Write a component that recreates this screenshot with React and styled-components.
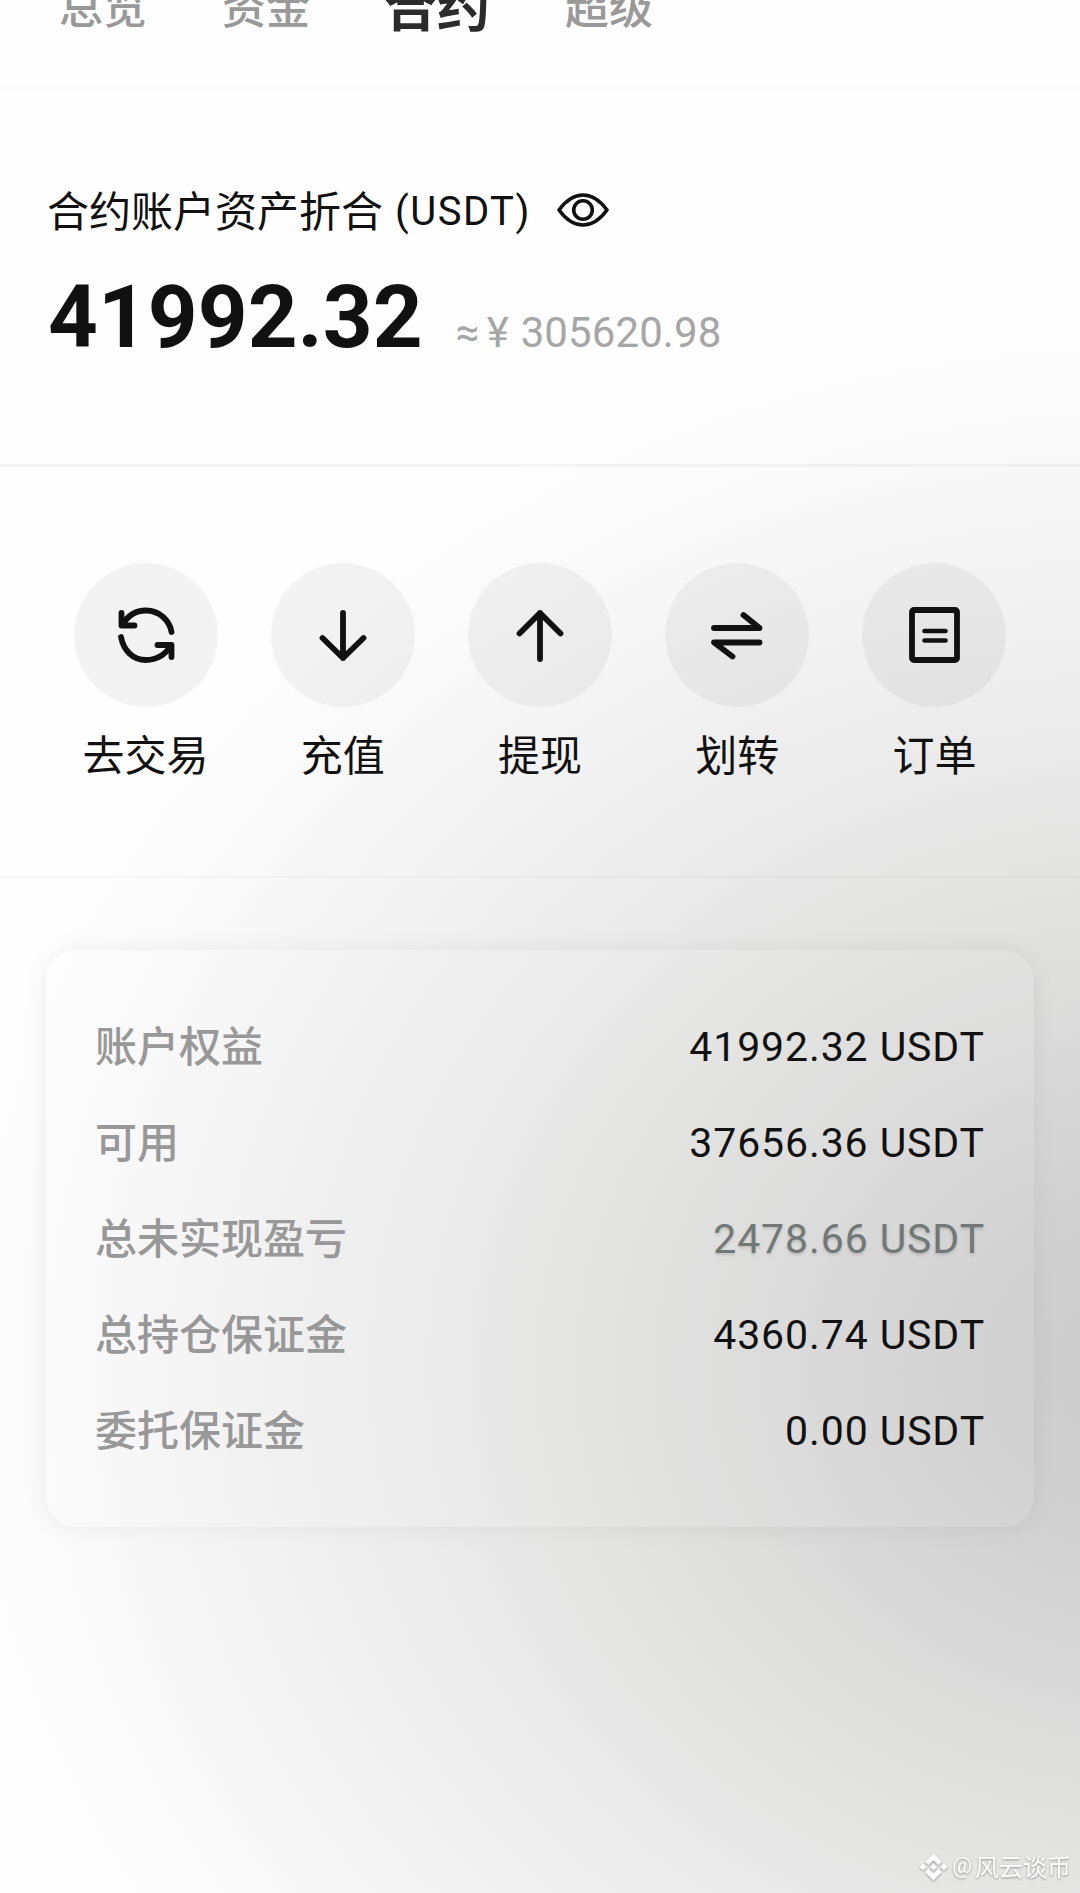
import { createGlobalStyle, styled } from "styled-components";

const TABS = [
  { name: "总览", left: 59 },
  { name: "资金", left: 75 },
  { name: "合约", left: 74, active: true },
  { name: "超级", left: 75 },
];

const ROWS = [
  { label: "账户权益", value: "41992.32 USDT" },
  { label: "可用", value: "37656.36 USDT" },
  { label: "总未实现盈亏", value: "2478.66 USDT", muted: true },
  { label: "总持仓保证金", value: "4360.74 USDT" },
  { label: "委托保证金", value: "0.00 USDT" },
];

const ACTIONS = [
  {
    name: "去交易",
    icon: (
      <>
        <path d="M7.500 12V24.500H20.500" />
        <path d="M8.500 24C14 14 23 9.500 32 9.500C45 9.500 55.500 19 57.500 31" />
        <path d="M57.500 56V44H43.500" />
        <path d="M57 44.500C51 54 42 59 32 59C19 59 9.500 49.500 7 36" />
      </>
    ),
  },
  {
    name: "充值",
    icon: <path d="M32 12V57M11.500 37L32 57L52.500 37" />,
  },
  {
    name: "提现",
    icon: <path d="M32 58V12M11.500 32.500L32 12L52.500 32.500" />,
  },
  {
    name: "划转",
    icon: (
      <>
        <path d="M9 27H54.500L38.500 14" />
        <path d="M54.500 41.500H9L27.500 55.500" />
      </>
    ),
  },
  {
    name: "订单",
    icon: (
      <>
        <rect x="10" y="9" width="45" height="50" rx="2" />
        <path d="M22.500 30H43.500M22.500 39.500H43.500" strokeWidth="4.600" />
      </>
    ),
  },
];

function EyeIcon() {
  return (
    <svg width="52" height="36" viewBox="0 0 52 36" fill="none" stroke="#111" strokeWidth="3.600">
      <path d="M2 18C10 7 18 3 26 3C34 3 42 7 50 18C42 29 34 33 26 33C18 33 10 29 2 18Z" strokeLinejoin="round" />
      <circle cx="26" cy="18" r="9.300" />
    </svg>
  );
}

function DiamondLogo() {
  return (
    <svg width="29" height="30" viewBox="0 0 30 30" fill="#fff">
      <path d="M15 1L23.500 9.500L20 13L15 8L10 13L6.500 9.500Z" />
      <path d="M15 29L23.500 20.500L20 17L15 22L10 17L6.500 20.500Z" />
      <path d="M15 11.500L18.500 15L15 18.500L11.500 15Z" />
      <path d="M4 11.500L7.500 15L4 18.500L0.500 15Z" />
      <path d="M26 11.500L29.500 15L26 18.500L22.500 15Z" />
    </svg>
  );
}

function App() {
  return (
    <Page>
      <GlobalStyle />
      <Tabs>
        {TABS.map(tab => (
          <Tab key={tab.name} $left={tab.left} $active={tab.active}>
            {tab.name}
          </Tab>
        ))}
      </Tabs>
      <Balance>
        <Title>
          <TitleName>合约账户资产折合</TitleName>
          <Unit>(USDT)</Unit>
          <EyeIcon />
        </Title>
        <Amount>
          <Total>41992.32</Total>
          <Approx>
            <Almost>≈</Almost>
            <Yen>¥</Yen>
            305620.98
          </Approx>
        </Amount>
      </Balance>
      <Actions>
        {ACTIONS.map(action => (
          <Action key={action.name}>
            <Circle>
              <svg width="64" height="68" viewBox="0 0 64 68">
                {action.icon}
              </svg>
            </Circle>
            <ActionName>{action.name}</ActionName>
          </Action>
        ))}
      </Actions>
      <Card>
        {ROWS.map(row => (
          <Row key={row.label}>
            <Label>{row.label}</Label>
            <Value $muted={row.muted}>{row.value}</Value>
          </Row>
        ))}
      </Card>
      <Watermark>
        <DiamondLogo />
        <At>@</At>
        <span>风云谈币</span>
      </Watermark>
    </Page>
  );
}

const GlobalStyle = createGlobalStyle`
  * {
    box-sizing: border-box;
  }
  body {
    margin: 0;
  }
`;
const Page = styled.main`
  position: relative;
  width: 1080px;
  height: 1893px;
  overflow: hidden;
  font-family: Roboto, "Noto Sans CJK SC", sans-serif;
  color: #111;
  background: radial-gradient(
    1220px 1060px at 1150px 1370px,
    #cacaca 0%,
    #d0d0d0 15%,
    #d9d9d9 30%,
    #e1e1e0 43%,
    #e9e9e9 57%,
    #f1f1f1 72%,
    #f8f8f8 86%,
    #fcfcfc 94%,
    #fefefe 101%
  );
`;
const Tabs = styled.nav`
  display: flex;
  align-items: flex-start;
  height: 89px;
  border-bottom: 2px solid #f8f8f8;
`;
const Tab = styled.span`
  margin-left: ${({ $left }) => $left}px;
  margin-top: -21px;
  font-size: ${({ $active }) => ($active ? 53 : 44)}px;
  font-weight: ${({ $active }) => ($active ? 700 : 500)};
  line-height: 60px;
  color: ${({ $active }) => ($active ? "#2b2b2b" : "#999")};
`;
const Balance = styled.section`
  height: 378px;
  padding: 91px 47px 0;
  border-bottom: 3px solid rgba(0, 0, 0, 0.035);
`;
const Title = styled.div`
  display: flex;
  align-items: center;
  height: 60px;
  font-size: 42px;

  svg {
    margin-left: 26px;
  }
`;
const TitleName = styled.span`
  padding-bottom: 3px;
`;
const Unit = styled.span`
  margin-left: 12px;
  padding-top: 3px;
  font-size: 40px;
  letter-spacing: 1.5px;
`;
const Amount = styled.div`
  display: flex;
  align-items: baseline;
  height: 110px;
  margin-top: 22px;
`;
const Total = styled.strong`
  margin-left: 1px;
  font-size: 87px;
  line-height: 110px;
`;
const Approx = styled.span`
  display: flex;
  margin-left: 33px;
  font-size: 42px;
  letter-spacing: 0.1px;
  color: #a6a6a6;
`;
const Almost = styled.span`
  width: 31px;
`;
const Yen = styled.span`
  width: 34px;
`;
const Actions = styled.section`
  display: grid;
  grid-template-columns: repeat(5, 1fr);
  height: 411px;
  padding: 96px 47px 0;
  border-bottom: 2px solid rgba(0, 0, 0, 0.025);
`;
const Action = styled.div`
  display: flex;
  flex-direction: column;
  align-items: center;
`;
const Circle = styled.div`
  display: flex;
  align-items: center;
  justify-content: center;
  width: 144px;
  height: 144px;
  border-radius: 50%;
  background: rgba(0, 0, 0, 0.043);

  svg {
    fill: none;
    stroke: #111;
    stroke-width: 5.8;
    stroke-linecap: round;
    stroke-linejoin: round;
  }
`;
const ActionName = styled.span`
  margin-top: 20px;
  font-size: 42px;
  line-height: 60px;
`;
const Card = styled.section`
  height: 577px;
  margin: 72px 46px 0;
  padding: 48px 49px 0 49px;
  border-radius: 30px;
  background: rgba(255, 255, 255, 0.06);
  box-shadow: 0 0 24px rgba(0, 0, 0, 0.06);
`;
const Row = styled.div`
  display: flex;
  align-items: center;
  justify-content: space-between;
  height: 96px;
`;
const Label = styled.span`
  padding-bottom: 5px;
  font-size: 42px;
  font-weight: 500;
  color: #989898;
`;
const Value = styled.span`
  padding-top: 2px;
  font-size: 41px;
  letter-spacing: 0.9px;
  color: ${({ $muted }) => ($muted ? "#727876" : "#111")};
  text-shadow: ${({ $muted }) => ($muted ? "0 2px 3px rgba(0, 0, 0, 0.15)" : "none")};
`;
const Watermark = styled.div`
  position: absolute;
  right: 9px;
  bottom: 8px;
  display: flex;
  align-items: center;
  height: 36px;
  font-size: 24px;
  color: #fff;
  filter: drop-shadow(0 1px 1px rgba(0, 0, 0, 0.35));

  span {
    margin-top: -3px;
  }
`;
const At = styled.span`
  margin: 0 3px 0 4px;
  font-size: 22px;
`;

export default App;
